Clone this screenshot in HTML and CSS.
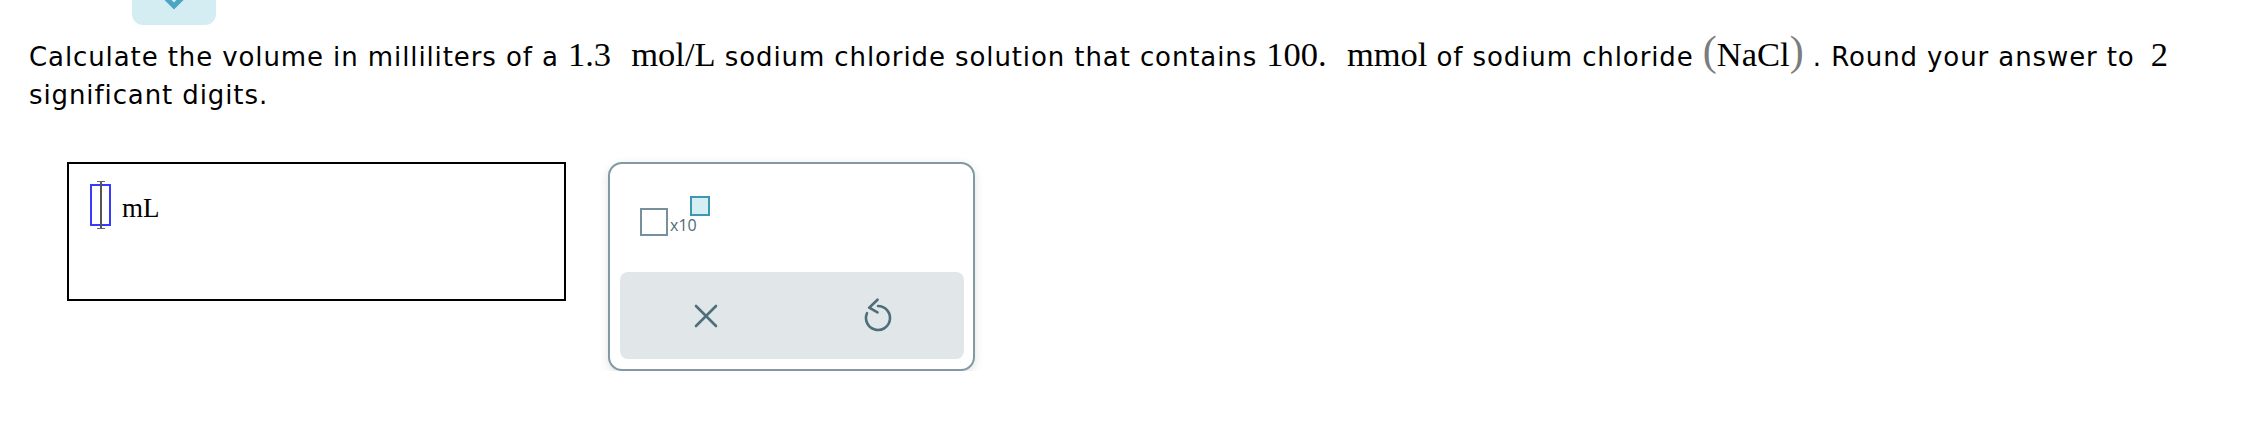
FILE: index.html
```html
<!DOCTYPE html>
<html lang="en">
<head>
<meta charset="utf-8">
<title>Question</title>
<link rel="stylesheet" href="styles.css">
</head>
<body>
<div class="page">
  <div class="tab">
    <svg class="chev" width="30" height="25" viewBox="0 0 30 25"><polyline points="3,-6 15,6 27,-6" fill="none" stroke="#4ba6c4" stroke-width="5"/></svg>
  </div>
  <p class="question">Calculate the volume in milliliters of a <span class="m">1.3</span> <span class="m unitgap">mol/L</span> sodium chloride solution that contains <span class="m">100.</span> <span class="m unitgap">mmol</span> of sodium chloride <span class="paren">(</span><span class="m">NaCl</span><span class="paren">)</span> . Round your answer to <span class="m numgap">2</span> significant digits.</p>
  <div class="work">
    <div class="answer">
      <span class="cursor"></span><span class="unit">mL</span>
    </div>
    <div class="panel">
      <div class="tools">
        <div class="sci">
          <span class="base"></span><span class="x10">x10</span><span class="sup"></span>
        </div>
      </div>
      <div class="actions">
        <button class="act" aria-label="Clear">
          <svg width="24" height="24" viewBox="0 0 24 24"><path d="M2 2L22 22M22 2L2 22" fill="none" stroke="#4d6e7a" stroke-width="2.6" stroke-linecap="round"/></svg>
        </button>
        <button class="act" aria-label="Undo">
          <svg width="32" height="36" viewBox="-16 -20 32 36"><path d="M0 -12A12 12 0 1 1 -11 -4.8" fill="none" stroke="#4d6e7a" stroke-width="2.6" stroke-linecap="round"/><path d="M-0.5 -18.3L-8.8 -10.3L-0.5 -5.7" fill="none" stroke="#4d6e7a" stroke-width="2.6" stroke-linecap="round" stroke-linejoin="round"/></svg>
        </button>
      </div>
    </div>
  </div>
</div>
</body>
</html>
```

FILE: styles.css
```css
body {
  margin: 0;
  background: #ffffff;
  color: #000000;
  font-family: "DejaVu Sans", Verdana, sans-serif;
}

.page {
  padding: 0 29px;
}

.tab {
  width: 84px;
  height: 25px;
  margin-left: 103px;
  background: #d4edf3;
  border-radius: 0 0 11px 11px;
  display: flex;
  justify-content: center;
}

.question {
  margin: 13px 0 0;
  font-size: 26px;
  line-height: 38px;
  letter-spacing: 0.9px;
}

.m {
  font-family: "Liberation Serif", "Times New Roman", serif;
  font-size: 34.5px;
  line-height: 0;
  letter-spacing: 0;
}

.unitgap {
  margin-left: 11px;
}

.numgap {
  margin-left: 7px;
}

.paren {
  font-family: "Liberation Serif", "Times New Roman", serif;
  font-size: 42px;
  line-height: 0;
  letter-spacing: 0;
  color: #7c7c7c;
  vertical-align: 1px;
}

.work {
  display: flex;
  align-items: flex-start;
  gap: 42px;
  margin: 48px 0 0 38px;
}

.answer {
  box-sizing: border-box;
  width: 499px;
  height: 139px;
  border: 2px solid #000;
  padding: 20px 0 0 21px;
  display: flex;
  align-items: flex-start;
}

.cursor {
  position: relative;
  box-sizing: border-box;
  width: 21px;
  height: 42px;
  border: 2px solid #3a3aff;
}

.cursor::before {
  content: "";
  position: absolute;
  left: 7.5px;
  top: -4px;
  width: 2px;
  height: 46px;
  background: #555;
}

.cursor::after {
  content: "";
  position: absolute;
  left: 4.5px;
  top: -5px;
  width: 8px;
  height: 48px;
  box-sizing: border-box;
  border-top: 1.5px solid #666;
  border-bottom: 1.5px solid #666;
}

.unit {
  margin: 8px 0 0 11px;
  font-family: "Liberation Serif", "Times New Roman", serif;
  font-size: 27px;
  line-height: 32px;
}

.panel {
  box-sizing: border-box;
  width: 367px;
  height: 209px;
  border: 2px solid #8199a3;
  border-radius: 14px;
  background: #fff;
  box-shadow: 0 3px 10px rgba(40, 60, 70, 0.15);
  padding: 0 9px 10px 10px;
  display: flex;
  flex-direction: column;
}

.tools {
  height: 108px;
  box-sizing: border-box;
  padding: 32px 0 0 20px;
}

.sci {
  display: flex;
  align-items: flex-start;
}

.base {
  box-sizing: border-box;
  width: 28px;
  height: 28px;
  margin-top: 12px;
  border: 2.5px solid #78909b;
}

.x10 {
  margin: 21px 0 0 2px;
  font-family: "Open Sans", sans-serif;
  font-size: 16px;
  line-height: 16px;
  color: #4f6b76;
}

.sup {
  box-sizing: border-box;
  width: 20px;
  height: 20px;
  margin-left: -7px;
  border: 2.5px solid #3c97b1;
  background: #d4eef4;
}

.actions {
  flex: 1;
  display: flex;
  background: #e1e6e9;
  border-radius: 8px;
}

.act {
  flex: 1;
  border: 0;
  background: transparent;
  padding: 0;
  display: flex;
  align-items: center;
  justify-content: center;
}
```
